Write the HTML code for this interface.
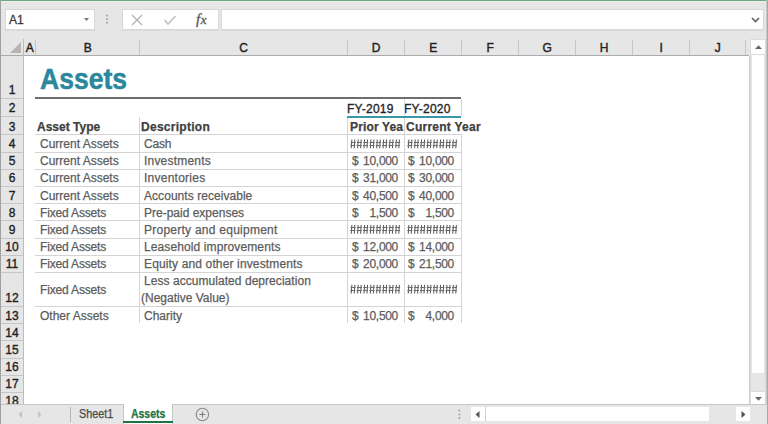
<!DOCTYPE html><html><head><meta charset="utf-8"><style>
*{margin:0;padding:0;box-sizing:border-box}
html,body{width:768px;height:424px;overflow:hidden;background:#e6e6e6;font-family:"Liberation Sans",sans-serif}
div{position:absolute}
.box{background:#fff;border:1px solid #d8d8d8;box-shadow:0 1px 0 #dcdcdc}
.t{font-size:12px;white-space:nowrap;line-height:14px;-webkit-text-stroke:0.25px currentColor}
.hl{height:1px;background:#d4d4d4}
.vl{width:1px;background:#d4d4d4}
</style></head><body>
<div style="left:0;top:0;width:768px;height:1px;background:#6aa883"></div>
<div style="left:0;top:1px;width:768px;height:1px;background:#eeeeee"></div>
<div class="box" style="left:5px;top:9px;width:90px;height:21px"></div>
<div class="t" style="left:9px;top:13px;color:#3a3a3a;-webkit-text-stroke:0.3px #3a3a3a">A1</div>
<svg style="position:absolute;left:84px;top:18px" width="6" height="4"><path d="M0 0 L5 0 L2.5 3Z" fill="#777"/></svg>
<svg style="position:absolute;left:104px;top:12px" width="6" height="14"><circle cx="3" cy="3.5" r="1" fill="#a0a0a0"/><circle cx="3" cy="7.1" r="1" fill="#a0a0a0"/><circle cx="3" cy="10.7" r="1" fill="#a0a0a0"/></svg>
<div class="box" style="left:122px;top:9px;width:97px;height:21px"></div>
<svg style="position:absolute;left:131px;top:14px" width="12" height="12"><path d="M1 1 L11 11 M11 1 L1 11" stroke="#b2b2b2" stroke-width="1.2"/></svg>
<svg style="position:absolute;left:163px;top:14px" width="14" height="12"><path d="M1.5 6 L5 10 L12.5 2" stroke="#c2c2c2" stroke-width="1.7" fill="none"/></svg>
<div style="left:196px;top:10px;font-family:'Liberation Serif',serif;font-style:italic;font-size:15px;line-height:18px;color:#555;-webkit-text-stroke:0.3px #555">f<span style="font-size:13px;margin-left:0.5px">x</span></div>
<div class="box" style="left:221px;top:9px;width:543px;height:21px"></div>
<svg style="position:absolute;left:751px;top:17px" width="9" height="6"><path d="M1 1 L4.5 4.5 L8 1" stroke="#606060" stroke-width="1.6" fill="none"/></svg>
<div style="left:1px;top:39px;width:748px;height:17px;background:#e6e6e6"></div>
<div style="left:1px;top:55px;width:748px;height:1px;background:#ababab"></div>
<svg style="position:absolute;left:9px;top:42px" width="13" height="12"><path d="M12 0 L12 11 L1 11Z" fill="#b5b5b5"/></svg>
<div style="left:23px;top:39px;width:1px;height:365px;background:#bcbcbc"></div>
<div style="left:35px;top:40px;width:1px;height:15px;background:#c6c6c6"></div>
<div class="t" style="left:23.7px;top:41px;width:12px;text-align:center;color:#222;-webkit-text-stroke:0.4px #222">A</div>
<div style="left:139px;top:40px;width:1px;height:15px;background:#c6c6c6"></div>
<div class="t" style="left:35.7px;top:41px;width:104px;text-align:center;color:#222;-webkit-text-stroke:0.4px #222">B</div>
<div style="left:347px;top:40px;width:1px;height:15px;background:#c6c6c6"></div>
<div class="t" style="left:139.7px;top:41px;width:208px;text-align:center;color:#222;-webkit-text-stroke:0.4px #222">C</div>
<div style="left:404px;top:40px;width:1px;height:15px;background:#c6c6c6"></div>
<div class="t" style="left:347.7px;top:41px;width:57px;text-align:center;color:#222;-webkit-text-stroke:0.4px #222">D</div>
<div style="left:461px;top:40px;width:1px;height:15px;background:#c6c6c6"></div>
<div class="t" style="left:404.7px;top:41px;width:57px;text-align:center;color:#222;-webkit-text-stroke:0.4px #222">E</div>
<div style="left:518px;top:40px;width:1px;height:15px;background:#c6c6c6"></div>
<div class="t" style="left:461.7px;top:41px;width:57px;text-align:center;color:#222;-webkit-text-stroke:0.4px #222">F</div>
<div style="left:575px;top:40px;width:1px;height:15px;background:#c6c6c6"></div>
<div class="t" style="left:518.7px;top:41px;width:57px;text-align:center;color:#222;-webkit-text-stroke:0.4px #222">G</div>
<div style="left:632px;top:40px;width:1px;height:15px;background:#c6c6c6"></div>
<div class="t" style="left:575.7px;top:41px;width:57px;text-align:center;color:#222;-webkit-text-stroke:0.4px #222">H</div>
<div style="left:689px;top:40px;width:1px;height:15px;background:#c6c6c6"></div>
<div class="t" style="left:632.7px;top:41px;width:57px;text-align:center;color:#222;-webkit-text-stroke:0.4px #222">I</div>
<div style="left:745px;top:40px;width:1px;height:15px;background:#c6c6c6"></div>
<div class="t" style="left:689.7px;top:41px;width:56px;text-align:center;color:#222;-webkit-text-stroke:0.4px #222">J</div>
<div style="left:24px;top:56px;width:725px;height:348px;background:#fff"></div>
<div style="left:1px;top:56px;width:22px;height:348px;background:#e6e6e6"></div>
<div style="left:1px;top:98px;width:22px;height:1px;background:#c6c6c6"></div>
<div style="left:1px;top:116px;width:22px;height:1px;background:#c6c6c6"></div>
<div style="left:1px;top:134px;width:22px;height:1px;background:#c6c6c6"></div>
<div style="left:1px;top:152px;width:22px;height:1px;background:#c6c6c6"></div>
<div style="left:1px;top:169px;width:22px;height:1px;background:#c6c6c6"></div>
<div style="left:1px;top:186px;width:22px;height:1px;background:#c6c6c6"></div>
<div style="left:1px;top:203px;width:22px;height:1px;background:#c6c6c6"></div>
<div style="left:1px;top:220px;width:22px;height:1px;background:#c6c6c6"></div>
<div style="left:1px;top:238px;width:22px;height:1px;background:#c6c6c6"></div>
<div style="left:1px;top:255px;width:22px;height:1px;background:#c6c6c6"></div>
<div style="left:1px;top:272px;width:22px;height:1px;background:#c6c6c6"></div>
<div style="left:1px;top:306px;width:22px;height:1px;background:#c6c6c6"></div>
<div style="left:1px;top:323px;width:22px;height:1px;background:#c6c6c6"></div>
<div style="left:1px;top:340px;width:22px;height:1px;background:#c6c6c6"></div>
<div style="left:1px;top:358px;width:22px;height:1px;background:#c6c6c6"></div>
<div style="left:1px;top:375px;width:22px;height:1px;background:#c6c6c6"></div>
<div style="left:1px;top:392px;width:22px;height:1px;background:#c6c6c6"></div>
<div class="t" style="left:1px;top:83.20px;width:22px;text-align:center;color:#222;-webkit-text-stroke:0.35px #222">1</div>
<div class="t" style="left:1px;top:101.40px;width:22px;text-align:center;color:#222;-webkit-text-stroke:0.35px #222">2</div>
<div class="t" style="left:1px;top:119.60px;width:22px;text-align:center;color:#222;-webkit-text-stroke:0.35px #222">3</div>
<div class="t" style="left:1px;top:137.20px;width:22px;text-align:center;color:#222;-webkit-text-stroke:0.35px #222">4</div>
<div class="t" style="left:1px;top:154.30px;width:22px;text-align:center;color:#222;-webkit-text-stroke:0.35px #222">5</div>
<div class="t" style="left:1px;top:171.40px;width:22px;text-align:center;color:#222;-webkit-text-stroke:0.35px #222">6</div>
<div class="t" style="left:1px;top:188.50px;width:22px;text-align:center;color:#222;-webkit-text-stroke:0.35px #222">7</div>
<div class="t" style="left:1px;top:205.60px;width:22px;text-align:center;color:#222;-webkit-text-stroke:0.35px #222">8</div>
<div class="t" style="left:1px;top:222.70px;width:22px;text-align:center;color:#222;-webkit-text-stroke:0.35px #222">9</div>
<div class="t" style="left:1px;top:239.80px;width:22px;text-align:center;color:#222;-webkit-text-stroke:0.35px #222">10</div>
<div class="t" style="left:1px;top:256.90px;width:22px;text-align:center;color:#222;-webkit-text-stroke:0.35px #222">11</div>
<div class="t" style="left:1px;top:291.40px;width:22px;text-align:center;color:#222;-webkit-text-stroke:0.35px #222">12</div>
<div class="t" style="left:1px;top:308.50px;width:22px;text-align:center;color:#222;-webkit-text-stroke:0.35px #222">13</div>
<div class="t" style="left:1px;top:325.60px;width:22px;text-align:center;color:#222;-webkit-text-stroke:0.35px #222">14</div>
<div class="t" style="left:1px;top:342.70px;width:22px;text-align:center;color:#222;-webkit-text-stroke:0.35px #222">15</div>
<div class="t" style="left:1px;top:359.80px;width:22px;text-align:center;color:#222;-webkit-text-stroke:0.35px #222">16</div>
<div class="t" style="left:1px;top:376.90px;width:22px;text-align:center;color:#222;-webkit-text-stroke:0.35px #222">17</div>
<div class="t" style="left:1px;top:394.00px;width:22px;text-align:center;color:#222;-webkit-text-stroke:0.35px #222">18</div>
<div style="left:749px;top:39px;width:17px;height:385px;background:#e6e6e6"></div>
<div style="left:749px;top:56px;width:1px;height:348px;background:#cdcdcd"></div>
<div style="left:750px;top:56px;width:1px;height:348px;background:#d8d8d8"></div>
<div style="left:751px;top:40px;width:14px;height:14px;background:#fff;box-shadow:0 0 0 1px #dcdcdc"></div>
<svg style="position:absolute;left:755px;top:45px" width="7" height="4"><path d="M0 4 L3.5 0.3 L7 4Z" fill="#666"/></svg>
<div style="left:752px;top:55px;width:12px;height:318px;background:#fff"></div>
<div style="left:751px;top:392px;width:14px;height:12px;background:#fff;box-shadow:0 0 0 1px #dcdcdc"></div>
<svg style="position:absolute;left:755px;top:397px" width="7" height="4"><path d="M0 0 L3.5 3.7 L7 0Z" fill="#666"/></svg>
<div style="left:765px;top:39px;width:1px;height:365px;background:#dadada"></div>
<div style="left:766px;top:0;width:1px;height:424px;background:#c8c8c8"></div>
<div style="left:767px;top:0;width:1px;height:424px;background:#a8a8a8"></div>
<div style="left:0;top:0;width:1px;height:424px;background:#a0a0a0"></div>
<div style="left:1px;top:404px;width:766px;height:20px;background:#e6e6e6;border-top:1px solid #c6c6c6"></div>
<svg style="position:absolute;left:18px;top:411px" width="4" height="7"><path d="M4 0 L0.5 3.5 L4 7Z" fill="#c4c4c4"/></svg>
<svg style="position:absolute;left:38px;top:411px" width="4" height="7"><path d="M0 0 L3.5 3.5 L0 7Z" fill="#c4c4c4"/></svg>
<div style="left:70px;top:407px;width:1px;height:15px;background:#b5b5b5"></div>
<div class="t" style="left:78.5px;top:406.5px;color:#4a4a4a;transform:scaleX(0.9);transform-origin:0 0">Sheet1</div>
<div style="left:123px;top:404px;width:50px;height:20px;background:#fff;border-left:1px solid #c6c6c6;border-right:1px solid #c6c6c6"></div>
<div style="left:123px;top:421px;width:50px;height:2px;background:#217346"></div>
<div class="t" style="left:130.5px;top:406.5px;color:#217346;font-weight:bold;transform:scaleX(0.87);transform-origin:0 0">Assets</div>
<svg style="position:absolute;left:195px;top:407px" width="15" height="15"><circle cx="7.4" cy="7.45" r="6.2" fill="none" stroke="#8a8a8a" stroke-width="1.1"/><path d="M7.4 4.4 V10.5 M4.4 7.45 H10.4" stroke="#7a7a7a" stroke-width="1"/></svg>
<svg style="position:absolute;left:456px;top:407px" width="6" height="14"><circle cx="3.4" cy="3.6" r="1" fill="#a0a0a0"/><circle cx="3.4" cy="7.5" r="1" fill="#a0a0a0"/><circle cx="3.4" cy="11.1" r="1" fill="#a0a0a0"/></svg>
<div style="left:471px;top:407px;width:14px;height:14px;background:#fff"></div>
<svg style="position:absolute;left:475px;top:411px" width="5" height="7"><path d="M4.5 0 L0.5 3.5 L4.5 7Z" fill="#555"/></svg>
<div style="left:485px;top:407px;width:224px;height:14px;background:#fff;border-left:1px solid #d0d0d0"></div>
<div style="left:736px;top:407px;width:14px;height:14px;background:#fff"></div>
<svg style="position:absolute;left:741px;top:411px" width="5" height="7"><path d="M0.5 0 L4.5 3.5 L0.5 7Z" fill="#555"/></svg>
<div style="left:40px;top:62px;font-size:30px;font-weight:bold;color:#2a879c;line-height:34px;transform:scaleX(0.885);transform-origin:0 0;white-space:nowrap;-webkit-text-stroke:0.5px #2a879c">Assets</div>
<div style="left:35px;top:97px;width:426px;height:2px;background:#6e6e6e"></div>
<div style="left:347px;top:116px;width:114px;height:2px;background:#3a96ab"></div>
<div class="t" style="left:347px;top:102px;color:#262626;-webkit-text-stroke:0.35px #262626;letter-spacing:0.25px">FY-2019</div>
<div class="t" style="left:404px;top:102px;color:#262626;-webkit-text-stroke:0.35px #262626;letter-spacing:0.25px">FY-2020</div>
<div class="vl" style="left:404px;top:99px;height:17px"></div>
<div class="vl" style="left:461px;top:99px;height:17px"></div>
<div class="vl" style="left:139px;top:117px;height:206px"></div>
<div class="vl" style="left:347px;top:118px;height:205px"></div>
<div class="vl" style="left:404px;top:118px;height:205px"></div>
<div class="vl" style="left:461px;top:134px;height:189px"></div>
<div class="hl" style="left:35px;top:134px;width:426px"></div>
<div class="hl" style="left:35px;top:152px;width:426px"></div>
<div class="hl" style="left:35px;top:169px;width:426px"></div>
<div class="hl" style="left:35px;top:186px;width:426px"></div>
<div class="hl" style="left:35px;top:203px;width:426px"></div>
<div class="hl" style="left:35px;top:220px;width:426px"></div>
<div class="hl" style="left:35px;top:238px;width:426px"></div>
<div class="hl" style="left:35px;top:255px;width:426px"></div>
<div class="hl" style="left:35px;top:272px;width:426px"></div>
<div class="hl" style="left:35px;top:306px;width:426px"></div>
<div class="t" style="left:37px;top:120px;font-weight:bold;color:#404040">Asset Type</div>
<div class="t" style="left:141px;top:120px;font-weight:bold;color:#404040;letter-spacing:0.27px">Description</div>
<div class="t" style="left:350px;top:120px;font-weight:bold;color:#404040;letter-spacing:0.15px">Prior Yea</div>
<div class="t" style="left:406px;top:120px;font-weight:bold;color:#404040;letter-spacing:0.25px">Current Year</div>
<div class="t" style="left:40px;top:137.2px;color:#5c5c5c;letter-spacing:0px">Current Assets</div>
<div class="t" style="left:144px;top:137.2px;color:#5c5c5c;letter-spacing:-0.2px">Cash</div>
<svg style="position:absolute;left:349px;top:138px" width="54" height="12"><path d="M2.85 1.57L2.25 10.17M5.85 1.57L5.25 10.17M9.21 1.57L8.61 10.17M12.21 1.57L11.61 10.17M15.57 1.57L14.97 10.17M18.57 1.57L17.97 10.17M21.93 1.57L21.33 10.17M24.93 1.57L24.33 10.17M28.29 1.57L27.69 10.17M31.29 1.57L30.69 10.17M34.65 1.57L34.05 10.17M37.65 1.57L37.05 10.17M41.01 1.57L40.41 10.17M44.01 1.57L43.41 10.17M47.37 1.57L46.77 10.17M50.37 1.57L49.77 10.17" stroke="#5a5a5a" stroke-width="1.05" fill="none"/><path d="M1.60 4.50H6.60M1.30 7.50H6.30M7.96 4.50H12.96M7.66 7.50H12.66M14.32 4.50H19.32M14.02 7.50H19.02M20.68 4.50H25.68M20.38 7.50H25.38M27.04 4.50H32.04M26.74 7.50H31.74M33.40 4.50H38.40M33.10 7.50H38.10M39.76 4.50H44.76M39.46 7.50H44.46M46.12 4.50H51.12M45.82 7.50H50.82" stroke="#6a6a6a" stroke-width="1" fill="none"/></svg>
<svg style="position:absolute;left:406px;top:138px" width="54" height="12"><path d="M2.85 1.57L2.25 10.17M5.85 1.57L5.25 10.17M9.21 1.57L8.61 10.17M12.21 1.57L11.61 10.17M15.57 1.57L14.97 10.17M18.57 1.57L17.97 10.17M21.93 1.57L21.33 10.17M24.93 1.57L24.33 10.17M28.29 1.57L27.69 10.17M31.29 1.57L30.69 10.17M34.65 1.57L34.05 10.17M37.65 1.57L37.05 10.17M41.01 1.57L40.41 10.17M44.01 1.57L43.41 10.17M47.37 1.57L46.77 10.17M50.37 1.57L49.77 10.17" stroke="#5a5a5a" stroke-width="1.05" fill="none"/><path d="M1.60 4.50H6.60M1.30 7.50H6.30M7.96 4.50H12.96M7.66 7.50H12.66M14.32 4.50H19.32M14.02 7.50H19.02M20.68 4.50H25.68M20.38 7.50H25.38M27.04 4.50H32.04M26.74 7.50H31.74M33.40 4.50H38.40M33.10 7.50H38.10M39.76 4.50H44.76M39.46 7.50H44.46M46.12 4.50H51.12M45.82 7.50H50.82" stroke="#6a6a6a" stroke-width="1" fill="none"/></svg>
<div class="t" style="left:40px;top:154.3px;color:#5c5c5c;letter-spacing:0px">Current Assets</div>
<div class="t" style="left:144px;top:154.3px;color:#5c5c5c;letter-spacing:0.2px">Investments</div>
<div class="t" style="left:352px;top:154.3px;color:#5c5c5c">$</div>
<div class="t" style="left:348px;top:154.3px;width:50px;text-align:right;color:#5c5c5c;letter-spacing:-0.3px">10,000</div>
<div class="t" style="left:408px;top:154.3px;color:#5c5c5c">$</div>
<div class="t" style="left:404px;top:154.3px;width:50px;text-align:right;color:#5c5c5c;letter-spacing:-0.3px">10,000</div>
<div class="t" style="left:40px;top:171.4px;color:#5c5c5c;letter-spacing:0px">Current Assets</div>
<div class="t" style="left:144px;top:171.4px;color:#5c5c5c;letter-spacing:0.25px">Inventories</div>
<div class="t" style="left:352px;top:171.4px;color:#5c5c5c">$</div>
<div class="t" style="left:348px;top:171.4px;width:50px;text-align:right;color:#5c5c5c;letter-spacing:-0.3px">31,000</div>
<div class="t" style="left:408px;top:171.4px;color:#5c5c5c">$</div>
<div class="t" style="left:404px;top:171.4px;width:50px;text-align:right;color:#5c5c5c;letter-spacing:-0.3px">30,000</div>
<div class="t" style="left:40px;top:188.5px;color:#5c5c5c;letter-spacing:0px">Current Assets</div>
<div class="t" style="left:144px;top:188.5px;color:#5c5c5c;letter-spacing:0.05px">Accounts receivable</div>
<div class="t" style="left:352px;top:188.5px;color:#5c5c5c">$</div>
<div class="t" style="left:348px;top:188.5px;width:50px;text-align:right;color:#5c5c5c;letter-spacing:-0.3px">40,500</div>
<div class="t" style="left:408px;top:188.5px;color:#5c5c5c">$</div>
<div class="t" style="left:404px;top:188.5px;width:50px;text-align:right;color:#5c5c5c;letter-spacing:-0.3px">40,000</div>
<div class="t" style="left:40px;top:205.6px;color:#5c5c5c;letter-spacing:-0.16px">Fixed Assets</div>
<div class="t" style="left:144px;top:205.6px;color:#5c5c5c;letter-spacing:0px">Pre-paid expenses</div>
<div class="t" style="left:352px;top:205.6px;color:#5c5c5c">$</div>
<div class="t" style="left:348px;top:205.6px;width:50px;text-align:right;color:#5c5c5c;letter-spacing:-0.3px">1,500</div>
<div class="t" style="left:408px;top:205.6px;color:#5c5c5c">$</div>
<div class="t" style="left:404px;top:205.6px;width:50px;text-align:right;color:#5c5c5c;letter-spacing:-0.3px">1,500</div>
<div class="t" style="left:40px;top:222.7px;color:#5c5c5c;letter-spacing:-0.16px">Fixed Assets</div>
<div class="t" style="left:144px;top:222.7px;color:#5c5c5c;letter-spacing:0.25px">Property and equipment</div>
<svg style="position:absolute;left:349px;top:223px" width="54" height="12"><path d="M2.85 2.07L2.25 10.67M5.85 2.07L5.25 10.67M9.21 2.07L8.61 10.67M12.21 2.07L11.61 10.67M15.57 2.07L14.97 10.67M18.57 2.07L17.97 10.67M21.93 2.07L21.33 10.67M24.93 2.07L24.33 10.67M28.29 2.07L27.69 10.67M31.29 2.07L30.69 10.67M34.65 2.07L34.05 10.67M37.65 2.07L37.05 10.67M41.01 2.07L40.41 10.67M44.01 2.07L43.41 10.67M47.37 2.07L46.77 10.67M50.37 2.07L49.77 10.67" stroke="#5a5a5a" stroke-width="1.05" fill="none"/><path d="M1.60 4.50H6.60M1.30 7.50H6.30M7.96 4.50H12.96M7.66 7.50H12.66M14.32 4.50H19.32M14.02 7.50H19.02M20.68 4.50H25.68M20.38 7.50H25.38M27.04 4.50H32.04M26.74 7.50H31.74M33.40 4.50H38.40M33.10 7.50H38.10M39.76 4.50H44.76M39.46 7.50H44.46M46.12 4.50H51.12M45.82 7.50H50.82" stroke="#6a6a6a" stroke-width="1" fill="none"/></svg>
<svg style="position:absolute;left:406px;top:223px" width="54" height="12"><path d="M2.85 2.07L2.25 10.67M5.85 2.07L5.25 10.67M9.21 2.07L8.61 10.67M12.21 2.07L11.61 10.67M15.57 2.07L14.97 10.67M18.57 2.07L17.97 10.67M21.93 2.07L21.33 10.67M24.93 2.07L24.33 10.67M28.29 2.07L27.69 10.67M31.29 2.07L30.69 10.67M34.65 2.07L34.05 10.67M37.65 2.07L37.05 10.67M41.01 2.07L40.41 10.67M44.01 2.07L43.41 10.67M47.37 2.07L46.77 10.67M50.37 2.07L49.77 10.67" stroke="#5a5a5a" stroke-width="1.05" fill="none"/><path d="M1.60 4.50H6.60M1.30 7.50H6.30M7.96 4.50H12.96M7.66 7.50H12.66M14.32 4.50H19.32M14.02 7.50H19.02M20.68 4.50H25.68M20.38 7.50H25.38M27.04 4.50H32.04M26.74 7.50H31.74M33.40 4.50H38.40M33.10 7.50H38.10M39.76 4.50H44.76M39.46 7.50H44.46M46.12 4.50H51.12M45.82 7.50H50.82" stroke="#6a6a6a" stroke-width="1" fill="none"/></svg>
<div class="t" style="left:40px;top:239.8px;color:#5c5c5c;letter-spacing:-0.16px">Fixed Assets</div>
<div class="t" style="left:144px;top:239.8px;color:#5c5c5c;letter-spacing:0.11px">Leasehold improvements</div>
<div class="t" style="left:352px;top:239.8px;color:#5c5c5c">$</div>
<div class="t" style="left:348px;top:239.8px;width:50px;text-align:right;color:#5c5c5c;letter-spacing:-0.3px">12,000</div>
<div class="t" style="left:408px;top:239.8px;color:#5c5c5c">$</div>
<div class="t" style="left:404px;top:239.8px;width:50px;text-align:right;color:#5c5c5c;letter-spacing:-0.3px">14,000</div>
<div class="t" style="left:40px;top:256.9px;color:#5c5c5c;letter-spacing:-0.16px">Fixed Assets</div>
<div class="t" style="left:144px;top:256.9px;color:#5c5c5c;letter-spacing:0.14px">Equity and other investments</div>
<div class="t" style="left:352px;top:256.9px;color:#5c5c5c">$</div>
<div class="t" style="left:348px;top:256.9px;width:50px;text-align:right;color:#5c5c5c;letter-spacing:-0.3px">20,000</div>
<div class="t" style="left:408px;top:256.9px;color:#5c5c5c">$</div>
<div class="t" style="left:404px;top:256.9px;width:50px;text-align:right;color:#5c5c5c;letter-spacing:-0.3px">21,500</div>
<div class="t" style="left:40px;top:282.5px;color:#5c5c5c;letter-spacing:-0.16px">Fixed Assets</div>
<div class="t" style="left:144px;top:274px;color:#5c5c5c;letter-spacing:0.05px">Less accumulated depreciation</div>
<div class="t" style="left:141px;top:291px;color:#5c5c5c">(Negative Value)</div>
<svg style="position:absolute;left:349px;top:283px" width="54" height="12"><path d="M2.85 1.87L2.25 10.47M5.85 1.87L5.25 10.47M9.21 1.87L8.61 10.47M12.21 1.87L11.61 10.47M15.57 1.87L14.97 10.47M18.57 1.87L17.97 10.47M21.93 1.87L21.33 10.47M24.93 1.87L24.33 10.47M28.29 1.87L27.69 10.47M31.29 1.87L30.69 10.47M34.65 1.87L34.05 10.47M37.65 1.87L37.05 10.47M41.01 1.87L40.41 10.47M44.01 1.87L43.41 10.47M47.37 1.87L46.77 10.47M50.37 1.87L49.77 10.47" stroke="#5a5a5a" stroke-width="1.05" fill="none"/><path d="M1.60 4.50H6.60M1.30 7.50H6.30M7.96 4.50H12.96M7.66 7.50H12.66M14.32 4.50H19.32M14.02 7.50H19.02M20.68 4.50H25.68M20.38 7.50H25.38M27.04 4.50H32.04M26.74 7.50H31.74M33.40 4.50H38.40M33.10 7.50H38.10M39.76 4.50H44.76M39.46 7.50H44.46M46.12 4.50H51.12M45.82 7.50H50.82" stroke="#6a6a6a" stroke-width="1" fill="none"/></svg>
<svg style="position:absolute;left:406px;top:283px" width="54" height="12"><path d="M2.85 1.87L2.25 10.47M5.85 1.87L5.25 10.47M9.21 1.87L8.61 10.47M12.21 1.87L11.61 10.47M15.57 1.87L14.97 10.47M18.57 1.87L17.97 10.47M21.93 1.87L21.33 10.47M24.93 1.87L24.33 10.47M28.29 1.87L27.69 10.47M31.29 1.87L30.69 10.47M34.65 1.87L34.05 10.47M37.65 1.87L37.05 10.47M41.01 1.87L40.41 10.47M44.01 1.87L43.41 10.47M47.37 1.87L46.77 10.47M50.37 1.87L49.77 10.47" stroke="#5a5a5a" stroke-width="1.05" fill="none"/><path d="M1.60 4.50H6.60M1.30 7.50H6.30M7.96 4.50H12.96M7.66 7.50H12.66M14.32 4.50H19.32M14.02 7.50H19.02M20.68 4.50H25.68M20.38 7.50H25.38M27.04 4.50H32.04M26.74 7.50H31.74M33.40 4.50H38.40M33.10 7.50H38.10M39.76 4.50H44.76M39.46 7.50H44.46M46.12 4.50H51.12M45.82 7.50H50.82" stroke="#6a6a6a" stroke-width="1" fill="none"/></svg>
<div class="t" style="left:40px;top:308.5px;color:#5c5c5c;letter-spacing:0px">Other Assets</div>
<div class="t" style="left:144px;top:308.5px;color:#5c5c5c;letter-spacing:0px">Charity</div>
<div class="t" style="left:352px;top:308.5px;color:#5c5c5c">$</div>
<div class="t" style="left:348px;top:308.5px;width:50px;text-align:right;color:#5c5c5c;letter-spacing:-0.3px">10,500</div>
<div class="t" style="left:408px;top:308.5px;color:#5c5c5c">$</div>
<div class="t" style="left:404px;top:308.5px;width:50px;text-align:right;color:#5c5c5c;letter-spacing:-0.3px">4,000</div>
</body></html>
